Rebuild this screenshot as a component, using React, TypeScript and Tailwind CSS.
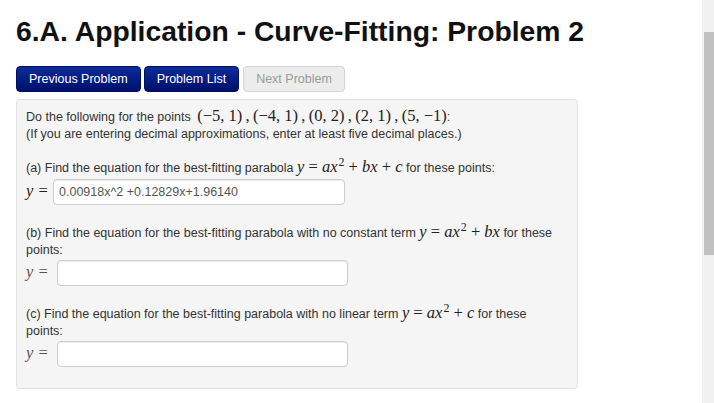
import React from 'react';

// MathJax-ish inline math: serif, larger than the body text
const M: React.FC<{ children: React.ReactNode; className?: string }> = ({ children, className = '' }) => (
  <span className={`font-['Liberation_Serif',serif] text-[16.5px] leading-none text-[#222] ${className}`}>{children}</span>
);

const I: React.FC<{ children: React.ReactNode }> = ({ children }) => <i className="italic">{children}</i>;

const Sq = () => <sup className="text-[12px] relative -top-[6px] ml-[1px] not-italic">2</sup>;

const AnswerRow: React.FC<{ value?: string; labelW: string; inputW: string; dim?: boolean }> = ({ value, labelW, inputW, dim }) => (
  <div className="flex items-center">
    <div className={`${labelW} shrink-0`}>
      <M className={dim ? 'text-[#555]' : ''}>
        <I>y</I> <span className="ml-[1px]">=</span>
      </M>
    </div>
    <div
      className={`${inputW} h-[26px] bg-white border border-[#ccc] rounded-[4px] shadow-[inset_0_1px_1px_rgba(0,0,0,0.075)] px-[5px] flex items-center text-[#555] text-[12.5px]`}
    >
      {value}
    </div>
  </div>
);

export default function App() {
  return (
    <div className="relative w-full h-[403px] overflow-hidden bg-white font-['Liberation_Sans',Arial,sans-serif] text-[#333]">
      <div className="px-4 pt-[14px]">
        <h1 className="text-[28.3px] leading-[34px] font-bold text-[#111]">
          6.A. Application - Curve-Fitting: Problem 2
        </h1>

        <div className="mt-[18px] flex gap-[3px] text-[12.5px]">
          <button className="h-[26px] px-[12px] rounded-[4px] border border-[#001060] bg-gradient-to-b from-[#0f2b99] to-[#000f6c] text-white">
            Previous Problem
          </button>
          <button className="h-[26px] px-[12px] rounded-[4px] border border-[#001060] bg-gradient-to-b from-[#0f2b99] to-[#000f6c] text-white">
            Problem List
          </button>
          <button className="ml-px h-[26px] px-[12px] rounded-[4px] border border-[#d4d4d4] bg-[#ececec] text-[#9a9a9a]">
            Next Problem
          </button>
        </div>

        <div className="mt-[7px] w-[562px] rounded-[4px] border border-[#e3e3e3] bg-[#f5f5f5] pl-[9px] pr-[9px] pt-[8px] pb-[21px] text-[12.5px] leading-[17px]">
          <p>
            Do the following for the points{'  '}
            <M className="ml-[3px]">
              (−5, 1)&thinsp;,&thinsp;(−4, 1)&thinsp;,&thinsp;(0, 2)&thinsp;,&thinsp;(2, 1)&thinsp;,&thinsp;(5, −1)
            </M>
            :
            <br />
            (If you are entering decimal approximations, enter at least five decimal places.)
          </p>

          <p className="mt-[16px]">
            (a) Find the equation for the best-fitting parabola{' '}
            <M>
              <I>y</I> = <I>ax</I>
              <Sq /> + <I>bx</I> + <I>c</I>
            </M>{' '}
            for these points:
          </p>
          <div className="mt-[2px]">
            <AnswerRow value="0.00918x^2 +0.12829x+1.96140" labelW="w-[27px]" inputW="w-[292px]" />
          </div>

          <p className="mt-[19px]">
            (b) Find the equation for the best-fitting parabola with no constant term{' '}
            <M>
              <I>y</I> = <I>ax</I>
              <Sq /> + <I>bx</I>
            </M>{' '}
            for these
            <br />
            points:
          </p>
          <div className="mt-[1px]">
            <AnswerRow labelW="w-[31px]" inputW="w-[291px]" dim />
          </div>

          <p className="mt-[19px]">
            (c) Find the equation for the best-fitting parabola with no linear term{' '}
            <M>
              <I>y</I> = <I>ax</I>
              <Sq /> + <I>c</I>
            </M>{' '}
            for these
            <br />
            points:
          </p>
          <div className="mt-[1px]">
            <AnswerRow labelW="w-[31px]" inputW="w-[291px]" dim />
          </div>
        </div>
      </div>

      {/* browser scrollbar */}
      <div className="absolute right-0 top-0 h-full w-[12px] bg-[#f1f1f1]">
        <div className="absolute left-[2px] right-0 top-[32px] h-[223px] bg-[#c1c1c1]" />
      </div>
    </div>
  );
}
